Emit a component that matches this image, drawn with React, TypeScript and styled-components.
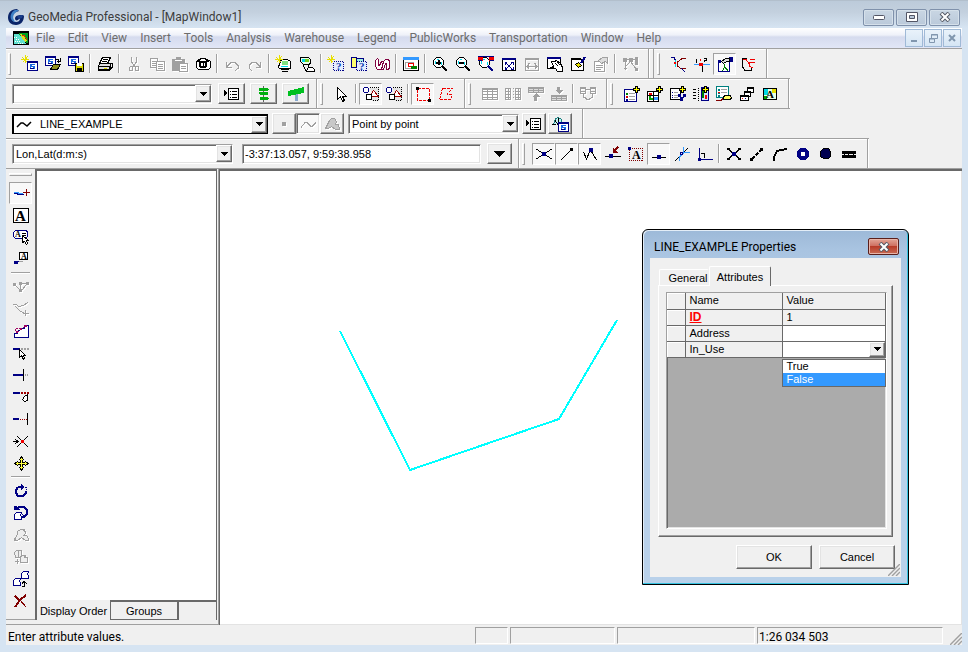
import React from 'react';
import styled, { createGlobalStyle, css } from 'styled-components';

const FACE = '#f0f0f0';
const SHADOW = '#a0a0a0';
const DARK = '#696969';
const FRAME = '#d6e4f2';
const NAVY = '#000084';
const UI = 'Roboto, "Open Sans", sans-serif';
const CLASSIC = '"Liberation Sans", Arial, sans-serif';

const raised = css`
  border: 1px solid;
  border-color: #fff ${DARK} ${DARK} #fff;
  box-shadow: inset -1px -1px ${SHADOW}, inset 1px 1px #e3e3e3;
`;
const sunken = css`
  border: 1px solid;
  border-color: ${SHADOW} #fff #fff ${SHADOW};
  box-shadow: inset 1px 1px ${DARK}, inset -1px -1px #e3e3e3;
`;

const GlobalStyle = createGlobalStyle`
  * { box-sizing: border-box; }
  body { margin: 0; }
  button, input, select { font: inherit; color: inherit; padding: 0; margin: 0; border-radius: 0; }
`;

/* ---------- icons ---------- */

type Part = { d?: string; s?: string; f?: string; w?: number; dash?: string; t?: string; x?: number; y?: number; size?: number };

const s = (color: string, d: string, w = 1, dash?: string): Part => ({ s: color, d, w, dash });
const f = (color: string, d: string): Part => ({ f: color, d });
const b = (fill: string, stroke: string, d: string, w = 1, dash?: string): Part => ({ f: fill, s: stroke, d, w, dash });
const t = (text: string, x: number, y: number, size: number, color = '#000'): Part => ({ t: text, x, y, size, f: color });
const box = (x: number, y: number, w: number, h: number) => `M${x + 0.5} ${y + 0.5}h${w - 1}v${h - 1}h${1 - w}z`;
const blk = (x: number, y: number, w: number, h: number) => `M${x} ${y}h${w}v${h}h${-w}z`;

const G = '#a0a0a0';
const K = '#000';
const Y = '#e8e000';
const R = '#f00000';
const CY = '#00d8e8';
const BL = '#3399ff';

const star = [s(Y, 'M0 1l5 5M6 0l-5 6M3.5 -1v8M-1 3.5h8')];
const plus = [s(K, 'M12.5 0v7M9 3.5h7', 3), s('#ffff00', 'M12.5 1v5M10 3.5h5')];
const sheet = [b('#fff', NAVY, box(0, 3, 13, 13)), s(NAVY, 'M2 7.5h2M2 10.5h2M2 13.5h2', 2), s(G, 'M5 7.5h6M5 10.5h6M5 13.5h6')];
const globeWin = (x: number, y: number) => [
  b('#fff', NAVY, box(x, y, 11, 10)),
  f(NAVY, blk(x, y, 11, 2)),
  f('#1c6ae0', blk(x + 3, y + 3, 5, 5)),
  f('#fff', blk(x + 5, y + 4, 3, 1) + blk(x + 4, y + 6, 2, 1)),
  f(NAVY, blk(x + 3, y + 7, 4, 1)),
];
const mesh = [b('#e4ecff', NAVY, box(5, 5, 11, 10), 1, '1 1'), t('?', 8, 14, 11, '#0c40b0')];
const lens = (sign: Part[]) => [
  s(K, 'M10 10l5 5', 2),
  b('#fff', K, 'M4.5 1.5h4l3 3v4l-3 3h-4l-3 -3v-4z'),
  s(CY, 'M3 5v3M5 3h2M9.5 6v3'),
  ...sign,
];
const shapes = [
  b('#fff', NAVY, 'M1.5 1.5h3l1 1v3l-1 1h-3l-1 -1v-3z'),
  b('#fff', '#a00000', 'M10.5 4.5l5 6h-9z'),
  b('#fff', K, box(3, 8, 6, 6)),
];
const dots = b('#e4e4e4', K, 'M7 1.5h8.5v13h-6', 1, '1 1');
const poly = (c: string, x: number, y: number) => b('#fff', c, `M${x + 0.5} ${y + 2.5}l2 -2h5l-1 3l1 1v3h-7z`);

const ICONS: Record<string, Part[]> = {
  newWin: [...globeWin(5, 5), ...star],
  openWin: [...globeWin(0, 0), b('#909020', K, 'M5.5 13.5l3 -5h7l-3 5z'), s(K, 'M10 3.5h3v3M15 2v3h-3')],
  saveWin: [...globeWin(0, 0), b('#d8d800', K, box(7, 7, 9, 9)), f('#fff', blk(9, 7, 5, 3)), f(K, blk(9, 12, 5, 3))],
  print: [b('#fff', K, 'M5.5 1.5h8l-3 6h-8z'), s(K, 'M6 3.5h5M5 5.5h5'), b('#ddd', K, 'M1.5 9.5l2 -2h11l-2 3v4h-11z'), s(K, 'M1 10.5h12M13.5 8v5l2 -2v-4'), s(K, 'M1 14h11', 2), f('#d8d800', blk(7, 12, 3, 1))],
  cut: [s(G, 'M5.5 1v5l4 5M10.5 1v5l-4 5'), s(G, 'M4.5 10.5h2v4h-3v-3zM9.5 10.5h3v4h-3z')],
  copy: [b('#fff', G, box(1, 2, 8, 10)), s(G, 'M3 5.5h4M3 7.5h4M3 9.5h4'), b('#fff', G, box(7, 5, 9, 10)), s(G, 'M9 8.5h5M9 10.5h5M9 12.5h5')],
  paste: [f(G, 'M0 3h4v-2h5v2h4v12h-13z'), s('#fff', 'M3 4.5h7'), b('#fff', G, box(7, 7, 9, 9)), s(G, 'M9 10.5h5M9 12.5h5')],
  camera: [b('#fff', K, 'M2.5 4.5h2l1 -2h5l1 2h3l1 1v6l-2 2h-10l-2 -2v-6z'), s(K, 'M2 5.5h3M11 5.5h3M3.5 3v2M12.5 3v2'), b('#fff', K, 'M6 6h4l1 1v3l-1 1h-4l-1 -1v-3z', 2), s(K, 'M8 7v3')],
  undo: [s(G, 'M2.5 6v5h5M3 10.5l4 -4h4l3 3v3l-3 2')],
  redo: [s(G, 'M13.5 6v5h-5M13 10.5l-4 -4h-4l-3 3v3l3 2')],
  connect: [b('#fff', K, 'M3.5 7.5l2 -4h6l3 2v6l-2 2h-7l-3 -2z'), f('#80e080', blk(6, 5, 6, 4)), s(CY, 'M5 10.5h7'), s(K, 'M4 12.5h11M6 15.5h6'), ...star],
  library: [b('#e8ffe8', K, 'M1.5 1.5h8l2 2v4l-2 1h-5l-3 -3z'), f(CY, blk(3, 3, 3, 3)), f('#70d020', blk(6, 3, 4, 3)), s(K, 'M4 9l3 6M9.5 9v3'), b('#fff', K, 'M7.5 14.5l2 -3h4l2 2v2h-8z')],
  query: [...mesh, ...star],
  query2: [b('#ffff70', NAVY, 'M.5 1.5h5v10h-5z'), b('#a0f0e0', NAVY, 'M5.5 2.5h7v5h-7z'), ...mesh],
  join: [b('#fff', '#800040', 'M1.5 4.5l2 -2l1 1v6h1l2 -4h2v2l-2 6h-4l-2 -3z'), b('#fff', '#800040', 'M9.5 5.5l2 -2h3l1 2v7l-2 1h-1v-6h-1l-2 6h-2z')],
  window: [b('#fff', K, box(0, 1, 16, 14)), f(BL, blk(0, 1, 16, 3)), s(G, box(2, 6, 9, 7)), s(R, box(5, 7, 6, 4)), f('#008000', blk(8, 10, 6, 3))],
  zoomIn: lens([s(K, 'M4 6.5h5M6.5 4v5', 2)]),
  zoomOut: lens([s(K, 'M4 6.5h5', 2)]),
  zoomFit: [...lens([]), f(R, blk(0, 1, 5, 4)), f(R, blk(11, 1, 5, 4)), s(NAVY, 'M0 .5h16M0 4.5h4M12 4.5h4'), s(NAVY, 'M10 10l5 5', 2)],
  fitAll: [b('#fff', K, box(1, 2, 14, 13)), f(NAVY, blk(1, 2, 14, 2)), s(NAVY, 'M5 7l6 6M11 7l-6 6M4 8.5v-2h2M10 6.5h2v2M4 11v2h2M10 13h2v-2')],
  fitSel: [s(G, box(1, 2, 14, 13)), f(G, blk(1, 2, 14, 2)), s(G, 'M4 7.5h2M10 7.5h2M3 10.5h10M5 8.5l-2 2l2 2M11 8.5l2 2l-2 2')],
  pan: [b('#fff', K, box(0, 2, 14, 11)), f(NAVY, blk(0, 1, 14, 2)), b('#fff', K, 'M4.5 5.5h3l2 -1l4 3l2 4v4h-5l-2 -3l-4 -1l2 -1z'), s(K, 'M8 7l3 3M10 6l3 3')],
  brush: [b('#fff', K, box(1, 3, 13, 12)), f(K, blk(1, 2, 10, 2)), b(Y, K, 'M5.5 8.5l3 3l3 -2l-3 -3z'), s(NAVY, 'M11 7l4 -6', 2)],
  props: [b('#fff', G, box(1, 5, 11, 11)), s(G, 'M3 9.5h7M3 11.5h7M3 13.5h5'), b('#ddd', G, 'M5.5 4.5l4 -3h5v6l-2 -2l-4 2z')],
  net: [f(G, blk(1, 2, 4, 4) + blk(7, 2, 4, 4) + blk(13, 1, 3, 8) + blk(13, 12, 3, 3)), s(G, 'M3.5 6v8M3 11l6 -6M9 6l5 7M5 3.5h8M2 12.5h3')],

  snapA: [s('#800000', 'M15 2.5h-4l-5 4v3l4 3h5'), s(NAVY, 'M0 1.5h3l2 4M10 12l4 4'), s(CY, 'M4.5 4v3M4.5 8v3'), f(R, 'M3 6h2v2h-2z')],
  snapB: [s(BL, 'M0 8.5h16'), s(K, 'M8.5 10v6M2.5 3v4M10 2.5h2v2h-2v1'), s(R, 'M6.5 3v2'), f(R, blk(5, 7, 4, 3))],
  propsOn: [b('#fff', NAVY, box(1, 5, 12, 11)), f(NAVY, blk(1, 4, 3, 3) + blk(12, 1, 4, 5)), b('#ddd', K, 'M4.5 5.5l4 -3h4v3h-3l-3 2z'), s('#008000', 'M7.5 8v3l-2 4M8 11l3 4')],
  region: [s(K, 'M7 2.5h-5v3l1 6l2 3h6v-3'), s(R, 'M3 3.5h3l3 4v3l4 1M8 6.5h7M10 3.5h5')],

  pointer: [b('#fff', K, 'M3.5 1.5v12l3 -3l2 5l2 -1l-2 -4h4z')],
  selA: [dots, ...shapes],
  selB: [dots, ...shapes],
  fence: [s(R, 'M2.5 2.5h12v12h-12z', 1, '3 1'), f(K, blk(1, 1, 3, 3) + blk(13, 13, 3, 3))],
  fencePoly: [s(R, 'M4.5 2.5h10l-5 5v1h5l-2 5h-11l3 -11', 1, '3 1')],
  table: [b('#fff', G, box(0, 2, 16, 12)), f(G, blk(0, 2, 16, 2)), s(G, 'M0 5.5h16M0 8.5h16M0 11.5h16M5.5 3v11M10.5 3v11')],
  tableCols: [s(G, box(0, 2, 6, 12)), s(G, box(10, 2, 6, 12)), s(G, 'M0 5.5h6M0 8.5h6M0 11.5h6M10 5.5h6M10 8.5h6M10 11.5h6M3.5 3v11M13.5 3v11'), s(G, 'M8 2v12', 1, '1 2')],
  tableUp: [b('#ddd', G, box(0, 1, 16, 6)), f(G, blk(0, 1, 16, 2)), s(G, 'M0 4.5h16M5.5 1v6M10.5 1v6'), f(G, 'M8 7l4 4h-3v4h-3v-4h-2z')],
  tableDown: [b('#ddd', G, box(0, 9, 16, 6)), f(G, blk(0, 9, 16, 2)), s(G, 'M0 12.5h16M5.5 9v6M10.5 9v6'), f(G, 'M6 1h3v3h3l-4 4l-4 -4h2z')],
  tableLink: [s(G, box(0, 1, 6, 7)), s(G, box(10, 1, 6, 7)), f(G, blk(0, 1, 6, 2) + blk(10, 1, 6, 2)), s(G, 'M3.5 8v3l3 2h3l3 -2v-3M5 11l3 3M12 11l-3 3M0 5.5h6M10 5.5h6M5 3.5h5')],
  legNew: [...sheet, s('#d00000', 'M2 10.5h2', 2), s('#008000', 'M2 7.5h2', 2), ...plus],
  legTheme: [b('#fff', K, box(0, 5, 12, 11)), f('#00a000', 'M2 10h2v2h2v2h-4z'), f(R, blk(2, 7, 3, 2)), f(BL, blk(7, 11, 4, 3)), s(K, 'M0 9.5h12M6.5 5v10M0 5.5h11'), ...plus],
  legJoin: [b('#fff', K, box(0, 2, 11, 12)), s(G, 'M4 6.5h4M4 9.5h4M4 11.5h4'), s(NAVY, 'M2 6.5h1M2 9.5h1M2 11.5h1'), f(NAVY, blk(8, 8, 3, 3) + blk(13, 8, 3, 3) + blk(10, 12, 3, 3)), s(NAVY, 'M10 10l2 3l2 -3'), ...plus],
  legFilter: [s(K, 'M0 3.5h3M0 6.5h3M0 9.5h3M0 12.5h3'), s(K, 'M5.5 2v13', 1, '1 1'), b('#d0e8ff', NAVY, box(8, 1, 8, 14)), s('#008000', 'M9.5 4v8', 2), s(R, 'M13 9v4', 2), ...plus],
  legEdit: [b('#fff', '#008080', box(0, 0, 13, 12)), s('#008080', 'M2 3.5h2M2 6.5h2M2 9.5h2', 2), s(R, 'M2 6.5h2'), s(G, 'M5 3.5h6M5 6.5h6'), b('#ffff60', K, 'M7.5 10.5l2 -1h5l1 3l-2 1h-6z'), s('#800000', 'M0 14.5h5l2 -2')],
  legStack: [b('#fff', K, box(8, 1, 7, 6)), f(K, blk(8, 1, 7, 2)), b('#fff', K, box(5, 5, 7, 6)), f(K, blk(5, 5, 7, 2)), b('#fff', K, box(1, 9, 9, 6)), f(K, blk(1, 9, 9, 2)), s(R, 'M3 12.5h1'), s(NAVY, 'M6 12.5h1')],
  legText: [b('#e8ffe8', K, box(1, 2, 14, 12)), f(CY, blk(2, 3, 4, 6)), f(Y, blk(10, 3, 4, 4)), f('#00a000', blk(2, 10, 3, 3)), t('A', 4, 12, 11)],

  list: [b('#fff', K, box(4, 2, 11, 12)), f(K, 'M0 4l3 3l-3 3z'), s(K, 'M6 5.5h1M8 5.5h5M6 8.5h1M8 8.5h5M6 11.5h1M8 11.5h5')],
  signs: [s('#606060', 'M7.5 0v16'), f('#00b010', 'M3 2h7l3 1l-2 2h-8zM2 7l2 -1h8v3h-8zM4 11h6l3 1l-2 2h-7z')],
  sign: [f('#8aaace', blk(7, 8, 3, 7)), f('#00c020', 'M0 5l16 -4v6l-16 3z')],
  point: [f(G, blk(6, 6, 4, 4))],
  line: [s(G, 'M1 11.5l4 -5h2l4 4h1l4 -4')],
  area: [b('#c8c8c8', G, 'M1.5 12.5l4 -8l2 -2h3l2 3l-1 3h3l1 5h-4l-4 -3l-3 2z')],
  placeGlobe: [b('#c0f0f0', '#208080', 'M1.5 8.5l2 -6l3 -1l3 2v4'), s(K, 'M0 8.5h4M3 4l3 5M6.5 2v4'), ...globeWin(6, 6)],

  crossing: [s(K, 'M0 3.5h1l6 4h2l6 -4h1M0 12.5h1l6 -4h2l6 4h1'), f(NAVY, blk(6, 6, 4, 4))],
  lineEnd: [s(K, 'M2 14l10 -10'), f(K, blk(11, 2, 3, 3))],
  vertex: [s(K, 'M1.5 6l3 7l4 -9l6 10'), f(NAVY, blk(7, 2, 4, 4))],
  onLine: [s(K, 'M0 10.5h16'), f(NAVY, blk(4, 8, 4, 4)), s('#800000', 'M13 1l-3 3', 2), f('#800000', 'M8 2l5 5h-5z')],
  snapText: [s('#800000', 'M1.5 2.5h13v12h-13z', 1, '1 1'), f(NAVY, blk(0, 1, 3, 3)), t('A', 4, 13, 12)],
  mid: [s(K, 'M1 11.5h14'), f(NAVY, blk(6, 9, 4, 4))],
  tangent: [s(K, 'M1 15l13 -13'), s(BL, 'M5.5 15v-4l5 -5h5M9.5 1v6'), s(NAVY, box(6, 6, 3, 3))],
  perp: [s(NAVY, 'M2.5 2v11h13'), s(K, 'M4 7.5h3v4'), f(NAVY, blk(1, 12, 3, 3))],
  cross2: [s(K, 'M2 3l12 10M14 3l-12 10'), f(K, blk(1, 2, 3, 2) + blk(12, 2, 3, 2) + blk(1, 12, 3, 2) + blk(12, 12, 3, 2)), f(NAVY, blk(6, 6, 4, 4))],
  dashLine: [s(K, 'M3 13l9 -9', 2, '4 1'), f(K, blk(1, 12, 3, 3) + blk(11, 2, 3, 3))],
  corner: [s(K, 'M2 14v-3l3 -6l9 -2', 2), f(K, blk(1, 12, 2, 3) + blk(12, 2, 3, 2))],
  ring: [b('#fff', NAVY, 'M6 4h4l2 2v4l-2 2h-4l-2 -2v-4z', 4)],
  disc: [b('#000050', K, 'M5.5 2.5h5l2 3v5l-2 2h-5l-3 -2v-5z')],
  dbl: [f(K, blk(1, 5, 14, 3) + blk(1, 9, 14, 3)), s(K, 'M3.5 7v3M7.5 7v3M12.5 7v3')],

  insert: [s(BL, 'M1 7.5h4l1 1h4'), s(NAVY, 'M1 8.5h3l1 1h6'), s('#800000', 'M13.5 4v7M10 7.5h7')],
  textA: [b('#fff', K, box(0, 1, 16, 15)), t('A', 2, 14, 15)],
  textEdit: [b('#fff', NAVY, 'M2.5 1.5h11l1 2v4l-2 2h-10l-2 -2v-4z'), t('A', 2, 8, 8), s(K, 'M9 4.5h4M9 6.5h4'), b('#fff', K, 'M9.5 6.5v7l2 -1l2 3l1 -1l-1 -3h2z')],
  leader: [b('#fff', K, box(6, 1, 9, 8)), t('A', 8, 8, 8), s(G, 'M5 10.5h5'), s(NAVY, 'M6 10.5h-2l-2 2'), f(NAVY, blk(1, 10, 4, 3))],
  verts: [s(G, 'M2 6l5 5M7.5 4v6M8 4.5h6M13 6l-4 5'), f(G, blk(0, 4, 3, 3) + blk(6, 3, 3, 3) + blk(13, 3, 3, 3) + blk(6, 10, 3, 3))],
  curve: [s(G, 'M0 3.5h3l3 2l4 -1l5 -3M2 5l5 5l6 3M12.5 9v6M10 12.5h6')],
  edit: [b('#fff', NAVY, 'M1.5 14.5v-4h3v-2l5 -3h2v-3h4v12z'), s('#a00060', 'M2.5 8v-3h6M5 9l6 -5', 1, '2 1'), f('#a00060', blk(3, 8, 2, 2) + blk(11, 2, 3, 2))],
  move: [s(NAVY, 'M0 4h7', 2), s(G, 'M8 4h8', 2, '2 1'), b('#fff', K, 'M6.5 4.5v8l2 -2l2 4l1 -1l-1 -3h2z')],
  split: [s(NAVY, 'M0 8h10', 2), s(K, 'M10.5 2v12'), s(G, 'M12 8h4', 2, '1 1')],
  trim: [s(NAVY, 'M0 4h7', 2), s('#a00000', 'M8 4h8', 2, '2 1'), b('#fff', K, 'M14.5 5.5v6l-3 1l-2 -2l2 -3z')],
  extend: [s(NAVY, 'M0 8h6', 2), s('#a00000', 'M7 8.5h7', 1, '1 1'), s(K, 'M14.5 2v12')],
  crossIns: [s(K, 'M4 3l11 11M15 3l-11 11M0 8.5h5M2 6l3 2.5l-3 2.5'), f(R, blk(8, 7, 3, 3))],
  pan4: [s(K, 'M8.5 3v11M3 8.5h11', 3), f(K, 'M8.5 1l3 4h-6zM8.5 16l3 -4h-6zM1 8.5l4 -3v6zM16 8.5l-4 -3v6z'), s('#ffff40', 'M8.5 3v11M3 8.5h11M7 4.5h3M7 12.5h3M4.5 7v3M12.5 7v3')],
  rotate: [s(NAVY, 'M5 4l-2 3v3l2 3h5l3 -3v-2', 2), f(NAVY, 'M5 3h3v-2l3 3l-3 3v-2h-3z'), f(NAVY, blk(12, 4, 2, 1) + blk(13, 6, 1, 1))],
  rotateObj: [s(NAVY, 'M4 3l2 -1h5l3 3v4l-3 3h-2', 2), f(NAVY, 'M1 1h2l4 4h-6z'), poly(NAVY, 1, 7), s(NAVY, 'M7 7l4 4')],
  areaEdit: [b('#eee', G, 'M1.5 12.5l3 -5v-3l3 -2h4l1 4l-2 2h3l2 3v2h-3l-4 -3l-4 3z'), f(G, blk(10, 2, 2, 2) + blk(1, 12, 2, 2))],
  copyObj: [b('#eee', G, 'M1.5 3.5l2 -2h5v5l-2 2h-4z'), s(G, 'M5.5 1v7'), b('#eee', G, 'M7.5 8.5l2 -2h3l-1 2h3v5h-7z'), s(G, 'M2 12.5h4M4.5 10v5')],
  duplicate: [poly(NAVY, 8, 0), poly(NAVY, 0, 7), s(K, 'M11.5 15v-5M9 12.5l2 -2l3 2M9 15.5h3')],
  remove: [s('#800000', 'M2 3l5 4l6 7'), s('#800000', 'M2 3l4 4M13 2l-6 5l-5 7', 2)],
};

const IconSvg = styled.svg<{ $off?: boolean }>`
  display: block;
  flex: none;
  overflow: visible;
  ${p => p.$off && 'filter: drop-shadow(1px 1px 0 #fff);'}
`;

function Icon({ name, off }: { name: string; off?: boolean }) {
  return (
    <IconSvg width="16" height="16" viewBox="0 0 16 16" shapeRendering="crispEdges" aria-hidden="true" $off={off}>
      {ICONS[name].map((p, i) =>
        p.t ? (
          <text key={i} x={p.x} y={p.y} fontSize={p.size} fill={p.f} fontFamily='"Liberation Serif", serif' fontWeight="bold">
            {p.t}
          </text>
        ) : (
          <path key={i} d={p.d} fill={p.f ?? 'none'} stroke={p.s} strokeWidth={p.w} strokeDasharray={p.dash} />
        ),
      )}
    </IconSvg>
  );
}

const Arrow = ({ big }: { big?: boolean }) => (
  <svg width={big ? 11 : 7} height={big ? 6 : 4} viewBox={big ? '0 0 11 6' : '0 0 7 4'} shapeRendering="crispEdges" aria-hidden="true">
    <path d={big ? 'M0 0h11l-5.5 6z' : 'M0 0h7l-3.5 4z'} fill="#000" />
  </svg>
);

const ResizeMark = () => (
  <svg width="12" height="12" viewBox="0 0 12 12" aria-hidden="true">
    <path d="M1 12L12 1M5 12l7-7M9 12l3-3" stroke="#fff" />
    <path d="M0 12L12 0M4 12l8-8M8 12l4-4" stroke="#a0a0a0" strokeWidth="1.5" />
  </svg>
);

/* ---------- window frame ---------- */

const Window = styled.div`
  min-height: 100vh;
  display: flex;
  flex-direction: column;
  padding: 0 6px 7px;
  background: ${FRAME};
  font: 12px/16px ${UI};
  color: #000;
`;
const TitleBar = styled.header`
  display: flex;
  align-items: center;
  height: 28px;
  margin: 0 -6px;
  padding: 5px 8px 0;
  gap: 4px;
  background: linear-gradient(#bccbda, #c3d0de 40%, ${FRAME});
  border-top: 1px solid #b2bfcc;
`;
const Title = styled.h1`
  flex: 1;
  margin: 0;
  font: 12px/16px ${UI};
  color: #3c3c3c;
`;
const Captions = styled.div`
  display: flex;
  gap: 2px;
`;
const Caption = styled.button`
  display: grid;
  place-items: center;
  width: 31px;
  height: 17px;
  border: 1px solid #7f91ab;
  border-radius: 2px;
  background: linear-gradient(#c9d6e3, #bac9da);
  box-shadow: inset 0 0 0 1px #d5e0ea;
`;
const MenuBar = styled.nav`
  display: flex;
  align-items: center;
  height: 20px;
  padding: 0 1px 0 7px;
  background: linear-gradient(#fff, #eef1f9 35%, #d5dbee 45%, #e1e6f6);
  color: #6d6d6d;
`;
const MenuItem = styled.button`
  border: 0;
  padding: 0 6px 0 7px;
  background: none;
  height: 20px;
  font: 12px/20px ${UI};
`;
const MenuIcon = styled.span`
  display: flex;
`;
const MdiButtons = styled.div`
  display: flex;
  gap: 1px;
  margin-left: auto;
`;
const MdiButton = styled.button`
  display: grid;
  place-items: center;
  width: 18px;
  height: 18px;
  border: 1px solid #9fb9d6;
  background: linear-gradient(#e9f2fa, #d5e5f4);
`;

/* ---------- toolbars ---------- */

const Toolbars = styled.div`
  border-top: 1px solid ${SHADOW};
  border-bottom: 1px solid ${SHADOW};
  background: ${FACE};
  font: 11px/14px ${CLASSIC};
`;
const Row = styled.div<{ $top?: boolean; $bottom?: boolean }>`
  display: flex;
  width: fit-content;
  height: ${p => 29 + (p.$top ? 1 : 0) + (p.$bottom ? 1 : 0)}px;
  ${p => p.$top && `border-top: 1px solid ${SHADOW};`}
  ${p => p.$bottom && `border-bottom: 1px solid ${SHADOW};`}
  box-shadow: inset 0 1px #fff;
`;
const Band = styled.div`
  display: flex;
  align-items: center;
  padding: 0 7px 0 2px;
  margin-right: 1px;
  border-right: 1px solid ${SHADOW};
  box-shadow: 1px 0 #fff;
`;
const EmptyBand = styled.div`
  width: 4px;
  margin-right: 1px;
  border-right: 1px solid ${SHADOW};
`;
const Form = styled(Band)<{ $end: number }>`
  padding: 0 ${p => p.$end}px 0 6px;
`;
const Grip = styled.span`
  width: 3px;
  height: 22px;
  margin-right: 7px;
  border: 1px solid;
  border-color: #fff ${SHADOW} ${SHADOW} #fff;
`;
const Sep = styled.span`
  width: 2px;
  height: 19px;
  margin: 0 2px;
  border-left: 1px solid ${SHADOW};
  border-right: 1px solid #fff;
`;
const Tool = styled.button<{ $on?: boolean }>`
  display: grid;
  place-items: center;
  width: 23px;
  height: 22px;
  border: 1px solid transparent;
  background: none;
  ${p => p.$on && `border-color: ${SHADOW} #fff #fff ${SHADOW}; background: #f8f8f8;`}
`;
const PushButton = styled.button<{ $w: number; $gap: number; $on?: boolean }>`
  display: grid;
  place-items: center;
  width: ${p => p.$w}px;
  height: 21px;
  margin-left: ${p => p.$gap}px;
  background: ${FACE};
  ${p => (p.$on ? sunken : raised)}
  ${p => p.$on && 'background: #f8f8f8;'}
`;
const Combo = styled.label<{ $w: number; $gap?: number; $strong?: boolean }>`
  position: relative;
  display: flex;
  align-items: center;
  width: ${p => p.$w}px;
  height: 20px;
  margin-left: ${p => p.$gap ?? 0}px;
  background: #fff;
  ${sunken}
  ${p => p.$strong && 'border: 2px solid #000; border-right-width: 1px; border-bottom-width: 1px; box-shadow: none;'}
`;
const ComboSelect = styled.select<{ $indent?: number }>`
  appearance: none;
  flex: 1;
  min-width: 0;
  height: 16px;
  padding-left: ${p => p.$indent ?? 3}px;
  border: 0;
  outline: 0;
  background: transparent;
`;
const ComboArrow = styled.span`
  display: grid;
  place-items: center;
  width: 16px;
  height: 17px;
  background: ${FACE};
  pointer-events: none;
  ${raised}
`;
const Coordinates = styled.input`
  width: 239px;
  height: 20px;
  margin-left: 9px;
  padding: 0 2px;
  ${sunken}
`;

type ToolDef = string | null;

/* A leading "+" marks a pressed tool, "-" a disabled one; null is a separator. */
function Tools({ items }: { items: ToolDef[] }) {
  return (
    <>
      {items.map((item, i) => {
        if (item === null) return <Sep key={i} />;
        const on = item[0] === '+';
        const off = item[0] === '-';
        const name = on || off ? item.slice(1) : item;
        return (
          <Tool key={i} type="button" aria-label={name} $on={on} disabled={off}>
            <Icon name={name} off={off} />
          </Tool>
        );
      })}
    </>
  );
}

function ToolBand({ items }: { items: ToolDef[] }) {
  return (
    <Band role="toolbar">
      <Grip />
      <Tools items={items} />
    </Band>
  );
}

function ComboBox(p: { label: string; value: string; width: number; gap?: number; strong?: boolean; indent?: number; children?: React.ReactNode }) {
  return (
    <Combo $w={p.width} $gap={p.gap} $strong={p.strong}>
      {p.children}
      <ComboSelect aria-label={p.label} $indent={p.indent}>
        <option>{p.value}</option>
      </ComboSelect>
      <ComboArrow>
        <Arrow />
      </ComboArrow>
    </Combo>
  );
}

/* ---------- work area ---------- */

const Work = styled.main`
  flex: 1;
  display: flex;
  min-height: 0;
  background: ${FACE};
`;
const Dock = styled.div`
  display: flex;
  width: 213px;
  padding-bottom: 4px;
  border-right: 1px solid ${SHADOW};
  border-bottom: 1px solid ${SHADOW};
`;
const Palette = styled.div`
  display: flex;
  flex-direction: column;
  align-items: center;
  width: 29px;
  padding-top: 4px;
  border-bottom: 1px solid ${SHADOW};
`;
const PaletteGrip = styled.span`
  width: 23px;
  height: 3px;
  margin-bottom: 6px;
  border: 1px solid;
  border-color: #fff ${SHADOW} ${SHADOW} #fff;
`;
const PaletteSep = styled.span`
  width: 19px;
  height: 2px;
  margin: 2px 0;
  border-top: 1px solid ${SHADOW};
  border-bottom: 1px solid #fff;
`;
const Legend = styled.section`
  flex: 1;
  display: flex;
  flex-direction: column;
  margin-right: 1px;
  border: solid ${DARK};
  border-width: 2px 1px 0 2px;
`;
const LegendBody = styled.div`
  flex: 1;
  background: #fff;
`;
const LegendTabs = styled.div`
  display: flex;
  height: 20px;
  font: 11px/18px ${CLASSIC};
`;
const LegendTab = styled.button<{ $active?: boolean }>`
  flex: none;
  width: ${p => (p.$active ? 73 : 69)}px;
  padding: 2px 0 0;
  line-height: 15px;
  white-space: nowrap;
  background: ${FACE};
  border: solid ${DARK};
  border-width: ${p => (p.$active ? '0' : '2px 2px 1px 1px')};
`;
const TabRest = styled.span`
  flex: 1;
  border-top: 2px solid ${DARK};
`;
const MapView = styled.section`
  position: relative;
  flex: 1;
  min-width: 0;
  background: #fff;
  border: solid ${DARK};
  border-width: 2px 0 0 1px;
  box-shadow: inset -1px -1px #e3e3e3;
`;
const MapSvg = styled.svg`
  display: block;
  width: 100%;
  height: 100%;
`;
const StatusBar = styled.footer`
  display: flex;
  height: 20px;
  padding-top: 1px;
  gap: 2px;
  background: ${FACE};
  line-height: 22px;
`;
const StatusText = styled.span`
  flex: 1;
  padding-left: 2px;
`;
const StatusCell = styled.span<{ $w: number }>`
  width: ${p => p.$w}px;
  margin: 1px 0;
  padding-left: 1px;
  line-height: 18px;
  border: 1px solid;
  border-color: ${SHADOW} #fff #fff ${SHADOW};
`;
const Corner = styled.span`
  display: flex;
  align-items: flex-end;
  width: 17px;
  justify-content: flex-end;
`;

/* ---------- properties dialog ---------- */

const Dialog = styled.div`
  position: absolute;
  left: 422px;
  top: 58px;
  width: 267px;
  padding: 0 7px 7px;
  border: 1px solid #000;
  border-radius: 6px 6px 0 0;
  background: linear-gradient(#9db9d8, #a9c4e1 20px, #b9d1ea 90px);
  box-shadow: inset -1px -1px #35c3e0, inset 1px 1px #e3edf7;
`;
const DialogHead = styled.div`
  display: flex;
  align-items: center;
  justify-content: space-between;
  height: 28px;
  padding: 5px 2px 0 4px;
`;
const DialogTitle = styled.h2`
  margin: 0;
  font: 12px/16px ${UI};
`;
const CloseButton = styled.button`
  display: grid;
  place-items: center;
  width: 31px;
  height: 17px;
  border: 1px solid #5a1f1b;
  border-radius: 2px;
  background: linear-gradient(#e2a597, #cf7162 45%, #b83c29 50%, #c96c55);
  box-shadow: inset 0 0 0 1px #e8b4a8;
`;
const DialogBody = styled.div`
  position: relative;
  padding: 8px 8px 8px;
  background: ${FACE};
  font: 11px/14px ${CLASSIC};
`;
const Tabs = styled.div`
  display: flex;
  align-items: flex-end;
  padding-left: 1px;
`;
const Tab = styled.button<{ $active?: boolean }>`
  z-index: ${p => (p.$active ? 1 : 0)};
  height: ${p => (p.$active ? 20 : 16)}px;
  width: ${p => (p.$active ? 62 : 50)}px;
  margin-bottom: ${p => (p.$active ? -1 : 0)}px;
  padding-left: ${p => (p.$active ? 0 : 8)}px;
  border: 1px solid;
  border-color: #fff ${p => (p.$active ? DARK : FACE)} transparent #fff;
  border-bottom: 0;
  border-radius: 2px 2px 0 0;
  background: ${FACE};
`;
const Panel = styled.div`
  padding: 6px 5px 7px 7px;
  border: 1px solid;
  border-color: #fff ${DARK} ${DARK} #fff;
  box-shadow: inset -1px -1px ${SHADOW};
`;
const Grid = styled.div`
  min-height: 237px;
  background: #ababab;
  ${sunken}
`;
const Attributes = styled.table`
  width: 100%;
  table-layout: fixed;
  border-collapse: collapse;
  text-align: left;
`;
const Cell = styled.td<{ $white?: boolean }>`
  position: relative;
  height: 16px;
  padding: 0 0 0 4px;
  border: 1px solid ${DARK};
  border-top: 0;
  border-left: 0;
  line-height: 15px;
  font-weight: normal;
  background: ${p => (p.$white ? '#fff' : FACE)};
`;
const Marker = styled(Cell)`
  width: 18px;
  box-shadow: inset 1px 1px #fff;
`;
const NameHead = styled(Cell)`
  width: 97px;
`;
const KeyName = styled.b`
  color: #f00;
  font-size: 12px;
  text-decoration: underline;
`;
const ValueInput = styled.input`
  display: block;
  width: 100%;
  height: 15px;
  border: 0;
  outline: 0;
  background: transparent;
`;
const ValueSelect = styled.label`
  display: flex;
  align-items: center;
  height: 15px;
  & ${ComboArrow} { height: 15px; }
`;
const Choices = styled.ul`
  position: absolute;
  z-index: 2;
  left: -1px;
  right: -1px;
  top: 17px;
  margin: 0;
  padding: 0;
  list-style: none;
  background: #fff;
  border: 1px solid ${DARK};
`;
const Choice = styled.li<{ $active?: boolean }>`
  padding-left: 4px;
  line-height: 13px;
  ${p => p.$active && 'background: #3399ff; color: #fff;'}
`;
const Buttons = styled.div`
  display: flex;
  justify-content: flex-end;
  gap: 7px;
  padding-top: 8px;
  margin-right: -2px;
`;
const DialogButton = styled.button`
  width: 76px;
  height: 24px;
  background: ${FACE};
  ${raised}
`;
const DialogCorner = styled.span`
  position: absolute;
  right: 1px;
  bottom: 1px;
  display: flex;
`;

const MENUS = ['File', 'Edit', 'View', 'Insert', 'Tools', 'Analysis', 'Warehouse', 'Legend', 'PublicWorks', 'Transportation', 'Window', 'Help'];

const PALETTE: ToolDef[] = [
  '+insert', 'textA', 'textEdit', 'leader', null,
  '-verts', '-curve', 'edit', 'move', 'split', 'trim', 'extend', 'crossIns', 'pan4', null,
  'rotate', 'rotateObj', '-areaEdit', '-copyObj', 'duplicate', 'remove',
];

function CrossMark() {
  return (
    <svg width="12" height="10" viewBox="0 0 12 10" aria-hidden="true">
      <path d="M2 1l8 8M10 1l-8 8" stroke="#555a66" strokeWidth="4" />
      <path d="M2.5 1.5l7 7M9.5 1.5l-7 7" stroke="#fff" strokeWidth="2" />
    </svg>
  );
}

function PropertiesDialog() {
  return (
    <Dialog role="dialog" aria-labelledby="dialog-title">
      <DialogHead>
        <DialogTitle id="dialog-title">LINE_EXAMPLE Properties</DialogTitle>
        <CloseButton type="button" aria-label="Close">
          <CrossMark />
        </CloseButton>
      </DialogHead>
      <DialogBody>
        <Tabs role="tablist">
          <Tab type="button" role="tab">General</Tab>
          <Tab type="button" role="tab" aria-selected="true" $active>Attributes</Tab>
        </Tabs>
        <Panel role="tabpanel">
          <Grid>
            <Attributes>
              <thead>
                <tr>
                  <Marker />
                  <NameHead as="th" scope="col">Name</NameHead>
                  <Cell as="th" scope="col">Value</Cell>
                </tr>
              </thead>
              <tbody>
                <tr>
                  <Marker />
                  <Cell><KeyName>ID</KeyName></Cell>
                  <Cell>1</Cell>
                </tr>
                <tr>
                  <Marker />
                  <Cell>Address</Cell>
                  <Cell $white><ValueInput aria-label="Address" /></Cell>
                </tr>
                <tr>
                  <Marker />
                  <Cell>In_Use</Cell>
                  <Cell $white>
                    <ValueSelect>
                      <ComboSelect aria-label="In_Use" defaultValue="">
                        <option value="" />
                        <option>True</option>
                        <option>False</option>
                      </ComboSelect>
                      <ComboArrow><Arrow /></ComboArrow>
                    </ValueSelect>
                    <Choices role="listbox" aria-label="In_Use choices">
                      <Choice role="option" aria-selected="false">True</Choice>
                      <Choice role="option" aria-selected="true" $active>False</Choice>
                    </Choices>
                  </Cell>
                </tr>
              </tbody>
            </Attributes>
          </Grid>
        </Panel>
        <Buttons>
          <DialogButton type="button">OK</DialogButton>
          <DialogButton type="button">Cancel</DialogButton>
        </Buttons>
        <DialogCorner><ResizeMark /></DialogCorner>
      </DialogBody>
    </Dialog>
  );
}

export default function App() {
  return (
    <>
      <GlobalStyle />
      <Window>
        <TitleBar>
          <svg width="16" height="16" viewBox="0 0 16 16" aria-hidden="true">
            <path d="M9 0C3 0 0 4 0 8.5S3 16 8 16c5 0 8-4 8-9l-1-1c-4 0-7 0-8 3 0 2 1 3 3 2l2-2c0 3-2 4-4 4-3 0-4-2-4-4 0-4 3-6 7-7z" fill="#0a2468" />
            <path d="M7 1C3 3 2 7 3 10c1 2 3 3 5 3-3-2-4-6-1-9l4-3z" fill="#3d7fc4" />
            <path d="M9 8c2-2 4-2 6-2l-1 3-3 1z" fill="#1b3f8c" />
          </svg>
          <Title>GeoMedia Professional - [MapWindow1]</Title>
          <Captions>
            <Caption type="button" aria-label="Minimize">
              <svg width="12" height="5" viewBox="0 0 12 5" aria-hidden="true"><rect x=".5" y=".5" width="11" height="4" rx="1" fill="#fff" stroke="#535666" /></svg>
            </Caption>
            <Caption type="button" aria-label="Maximize">
              <svg width="12" height="10" viewBox="0 0 12 10" aria-hidden="true"><path d="M.5.5h11v9H.5z" fill="#fff" stroke="#535666" /><path d="M3.5 3.5h5v3h-5z" fill="#bac9da" stroke="#535666" /></svg>
            </Caption>
            <Caption type="button" aria-label="Close"><CrossMark /></Caption>
          </Captions>
        </TitleBar>
        <MenuBar>
          <MenuIcon>
            <svg width="16" height="14" viewBox="0 0 16 14" shapeRendering="crispEdges" aria-hidden="true">
              <path d="M0 0h16v14H0z" fill="#000" />
              <path d="M1 3h5l4 4 3 6H1z" fill="#60e0d0" />
              <path d="M6 2h9v10h-2l-3-5-4-3z" fill="#00a020" />
              <path d="M7 3l3 1 4 6-2 1-3-4z" fill="#d8e020" />
              <path d="M9 4l2 0 3 5" stroke="#e03000" fill="none" />
              <path d="M1 6h3M3 8h4M2 10h5M5 12h6" stroke="#fff" strokeDasharray="1 1" />
            </svg>
          </MenuIcon>
          {MENUS.map(m => <MenuItem key={m} type="button">{m}</MenuItem>)}
          <MdiButtons>
            <MdiButton type="button" aria-label="Minimize map"><svg width="7" height="9" viewBox="0 0 7 9" aria-hidden="true"><path d="M0 6h6v2H0z" fill="#8096ae" /></svg></MdiButton>
            <MdiButton type="button" aria-label="Restore map"><svg width="9" height="9" viewBox="0 0 9 9" aria-hidden="true"><path d="M2.5 4V.5h6v4H6M2 1h7M.5 4.5h5v4h-5zM0 5h6" fill="none" stroke="#8096ae" /></svg></MdiButton>
            <MdiButton type="button" aria-label="Close map"><svg width="8" height="8" viewBox="0 0 8 8" aria-hidden="true"><path d="M1 1l6 6M7 1L1 7" stroke="#8096ae" strokeWidth="2" /></svg></MdiButton>
          </MdiButtons>
        </MenuBar>

        <Toolbars>
          <Row>
            <ToolBand items={['newWin', 'openWin', 'saveWin', null, 'print', null, '-cut', '-copy', '-paste', 'camera', null, '-undo', '-redo', null, 'connect', 'library', null, 'query', 'query2', 'join', null, 'window', null, 'zoomIn', 'zoomOut', 'zoomFit', 'fitAll', '-fitSel', 'pan', 'brush', '-props', null, '-net']} />
            <EmptyBand />
            <ToolBand items={['snapA', 'snapB', '+propsOn', 'region']} />
          </Row>
          <Row $top $bottom>
            <Form $end={7}>
              <ComboBox label="Query" value="" width={200} />
              <PushButton type="button" aria-label="List" $w={27} $gap={6}><Icon name="list" /></PushButton>
              <PushButton type="button" aria-label="Signs" $w={27} $gap={5}><Icon name="signs" /></PushButton>
              <PushButton type="button" aria-label="Sign" $w={27} $gap={5}><Icon name="sign" /></PushButton>
            </Form>
            <ToolBand items={['pointer', null, '+selA', 'selB', null, '+fence', 'fencePoly']} />
            <ToolBand items={['-table', '-tableCols', '-tableUp', '-tableDown', null, '-tableLink']} />
            <ToolBand items={['legNew', 'legTheme', 'legJoin', 'legFilter', 'legEdit', 'legStack', 'legText']} />
          </Row>
          <Row>
            <Form $end={10}>
              <ComboBox label="Feature class" value="LINE_EXAMPLE" width={256} strong indent={8}>
                <svg width="18" height="10" viewBox="0 0 18 10" aria-hidden="true"><path d="M3 8l4-4h2l4 3 4-4" fill="none" stroke="#000" strokeWidth="1.5" /></svg>
              </ComboBox>
              <PushButton type="button" aria-label="Point" $w={24} $gap={4}><Icon name="point" off /></PushButton>
              <PushButton type="button" aria-label="Line" $w={24} $gap={0} $on><Icon name="line" off /></PushButton>
              <PushButton type="button" aria-label="Area" $w={24} $gap={0}><Icon name="area" off /></PushButton>
              <ComboBox label="Placement mode" value="Point by point" width={171} gap={4} />
              <PushButton type="button" aria-label="Options" $w={24} $gap={3}><Icon name="list" /></PushButton>
              <PushButton type="button" aria-label="Copy attributes" $w={24} $gap={2}><Icon name="placeGlobe" /></PushButton>
            </Form>
          </Row>
          <Row $top>
            <Form $end={6}>
              <ComboBox label="Coordinate format" value="Lon,Lat(d:m:s)" width={221} />
              <Coordinates aria-label="Coordinates" defaultValue="-3:37:13.057, 9:59:38.958" />
              <PushButton type="button" aria-label="Recent coordinates" $w={25} $gap={6}><Arrow big /></PushButton>
            </Form>
            <ToolBand items={['+crossing', '+lineEnd', '+vertex', 'onLine', 'snapText', '+mid', 'tangent', 'perp', null, 'cross2', 'dashLine', 'corner', 'ring', 'disc', 'dbl']} />
          </Row>
        </Toolbars>

        <Work>
          <Dock>
            <Palette role="toolbar">
              <PaletteGrip />
              {PALETTE.map((item, i) => (item === null ? <PaletteSep key={i} /> : <Tools key={i} items={[item]} />))}
            </Palette>
            <Legend aria-label="Legend">
              <LegendBody />
              <LegendTabs role="tablist">
                <LegendTab type="button" role="tab" $active>Display Order</LegendTab>
                <LegendTab type="button" role="tab">Groups</LegendTab>
                <TabRest />
              </LegendTabs>
            </Legend>
          </Dock>
          <MapView aria-label="MapWindow1">
            <MapSvg aria-hidden="true">
              <polyline points="120,160 190,299 339,248 397,149" fill="none" stroke="#00ffff" strokeWidth="2" shapeRendering="crispEdges" />
            </MapSvg>
            <PropertiesDialog />
          </MapView>
        </Work>

        <StatusBar>
          <StatusText>Enter attribute values.</StatusText>
          <StatusCell $w={33} />
          <StatusCell $w={105} />
          <StatusCell $w={138} />
          <StatusCell $w={186}>1:26 034 503</StatusCell>
          <Corner><ResizeMark /></Corner>
        </StatusBar>
      </Window>
    </>
  );
}
